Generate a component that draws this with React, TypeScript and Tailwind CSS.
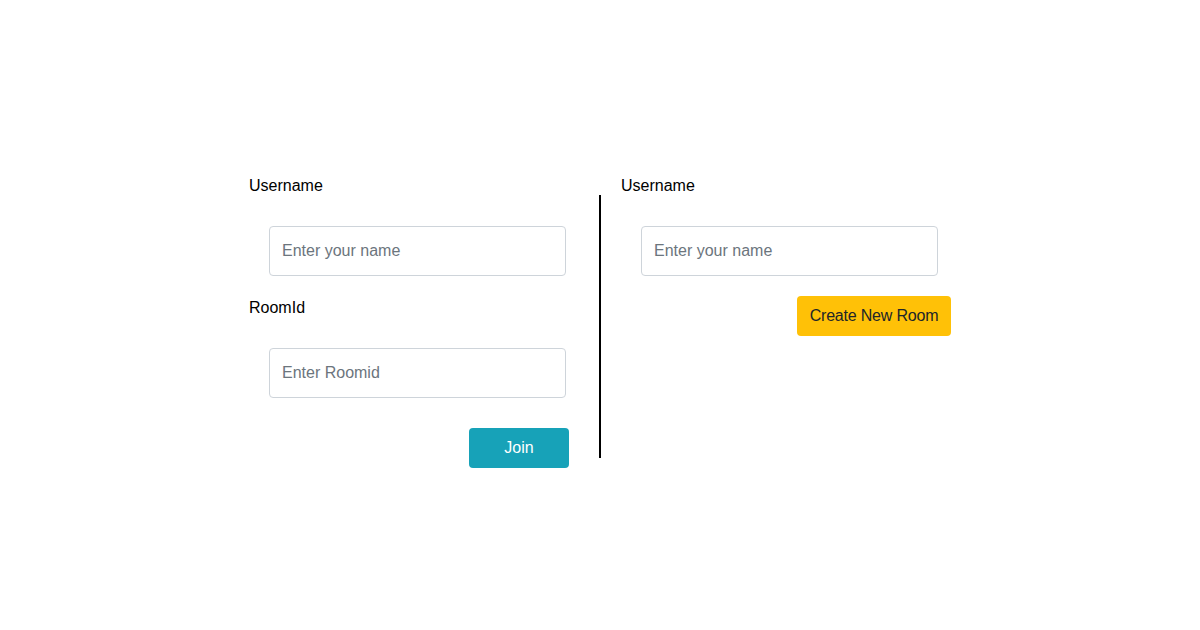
import { useState } from "react";

export default function App() {
  const [joinName, setJoinName] = useState("");
  const [roomId, setRoomId] = useState("");
  const [createName, setCreateName] = useState("");

  return (
    <div
      className="flex min-h-screen w-full items-start justify-center bg-white pt-[174px] text-black"
      style={{ fontFamily: '"Liberation Sans", Arial, sans-serif' }}
    >
      {/* Join room */}
      <div className="flex w-[320px] flex-col">
        <label className="h-6 text-base leading-6">Username</label>
        <input
          className="mt-[28px] ml-5 h-[50px] w-[297px] rounded border border-[#ced4da] px-3 text-base text-[#495057] outline-none placeholder:text-[#6c757d]"
          placeholder="Enter your name"
          value={joinName}
          onChange={(e) => setJoinName(e.target.value)}
        />
        <label className="mt-[20px] h-6 text-base leading-6">RoomId</label>
        <input
          className="mt-[28px] ml-5 h-[50px] w-[297px] rounded border border-[#ced4da] px-3 text-base text-[#495057] outline-none placeholder:text-[#6c757d]"
          placeholder="Enter Roomid"
          value={roomId}
          onChange={(e) => setRoomId(e.target.value)}
        />
        <button className="mt-[30px] h-10 w-[100px] self-end rounded bg-[#17a2b8] text-base text-white">
          Join
        </button>
      </div>

      {/* divider */}
      <div className="mt-[21px] ml-[30px] h-[263px] w-[2px] bg-black" />

      {/* Create room */}
      <div className="ml-5 flex w-[330px] flex-col">
        <label className="h-6 text-base leading-6">Username</label>
        <input
          className="mt-[28px] ml-5 h-[50px] w-[297px] rounded border border-[#ced4da] px-3 text-base text-[#495057] outline-none placeholder:text-[#6c757d]"
          placeholder="Enter your name"
          value={createName}
          onChange={(e) => setCreateName(e.target.value)}
        />
        <button className="mt-5 h-10 w-[154px] self-end rounded bg-[#ffc107] text-base tracking-[-0.2px] text-[#212529]">
          Create New Room
        </button>
      </div>
    </div>
  );
}
